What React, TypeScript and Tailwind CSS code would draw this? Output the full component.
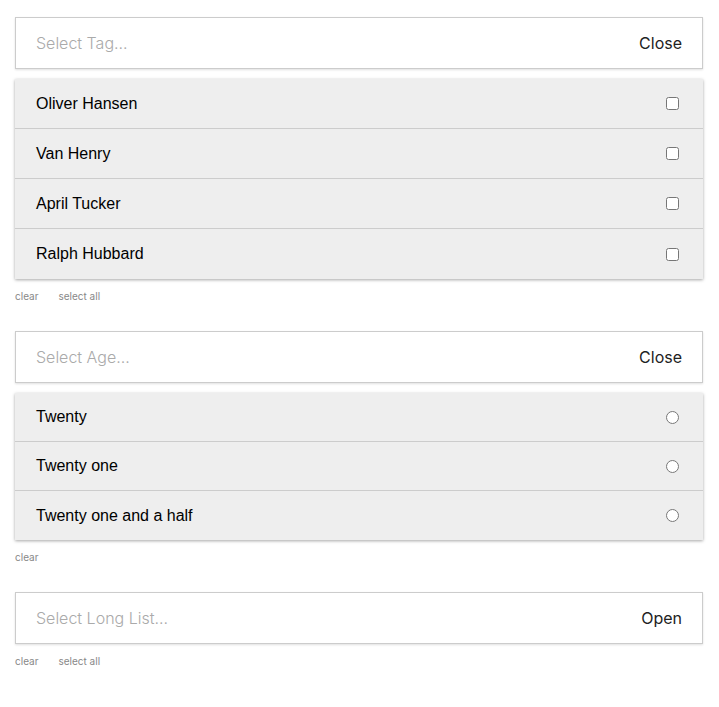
import React from 'react';

type Section = {
  placeholder: string;
  toggle: string;
  kind: 'checkbox' | 'radio' | null;
  items: string[];
  selectAll: boolean;
  tall: boolean;
};

const sections: Section[] = [
  {
    placeholder: 'Select Tag...',
    toggle: 'Close',
    kind: 'checkbox',
    items: ['Oliver Hansen', 'Van Henry', 'April Tucker', 'Ralph Hubbard'],
    selectAll: true,
    tall: true,
  },
  {
    placeholder: 'Select Age...',
    toggle: 'Close',
    kind: 'radio',
    items: ['Twenty', 'Twenty one', 'Twenty one and a half'],
    selectAll: false,
    tall: false,
  },
  {
    placeholder: 'Select Long List...',
    toggle: 'Open',
    kind: null,
    items: [],
    selectAll: true,
    tall: false,
  },
];

const Picker: React.FC<{ s: Section; idx: number }> = ({ s, idx }) => {
  return (
    <div className="mb-[28px]">
      <div className="flex h-[52px] items-center justify-between border border-[#cccccc] bg-white pl-5 pr-5 shadow-[0_1px_2px_rgba(0,0,0,0.12)]">
        <span className="font-['Inter',sans-serif] text-[16px] font-light text-[#aaaaaa]">{s.placeholder}</span>
        <span className="font-['Inter',sans-serif] text-[16px] text-[#222222]">{s.toggle}</span>
      </div>
      {s.items.length > 0 && (
        <div className="mt-[10px] bg-[#eeeeee] shadow-[0_1px_3px_rgba(0,0,0,0.35)]">
          {s.items.map((item, i) => (
            <label
              key={item}
              className={`flex items-center justify-between pl-[21px] pr-[24px] ${i < s.items.length - 1 ? 'border-b border-[#cccccc]' : ''} ${s.tall ? 'h-[50px]' : 'h-[49px]'}`}
            >
              <span className="font-['Liberation_Sans',Arial,sans-serif] text-[16px] text-black">{item}</span>
              <input
                type={s.kind ?? 'checkbox'}
                name={`group-${idx}`}
                className="m-0 h-[13px] w-[13px]"
              />
            </label>
          ))}
        </div>
      )}
      <div className="mt-[10px] flex gap-5 font-['Inter',sans-serif] text-[10px] leading-[14px] text-[#888888]">
        <span>clear</span>
        {s.selectAll && <span>select all</span>}
      </div>
    </div>
  );
};

export default function App() {
  return (
    <div className="min-h-screen bg-white pl-[15px] pr-[16px] pt-[17px]">
      {sections.map((s, i) => (
        <Picker key={s.placeholder} s={s} idx={i} />
      ))}
    </div>
  );
}
